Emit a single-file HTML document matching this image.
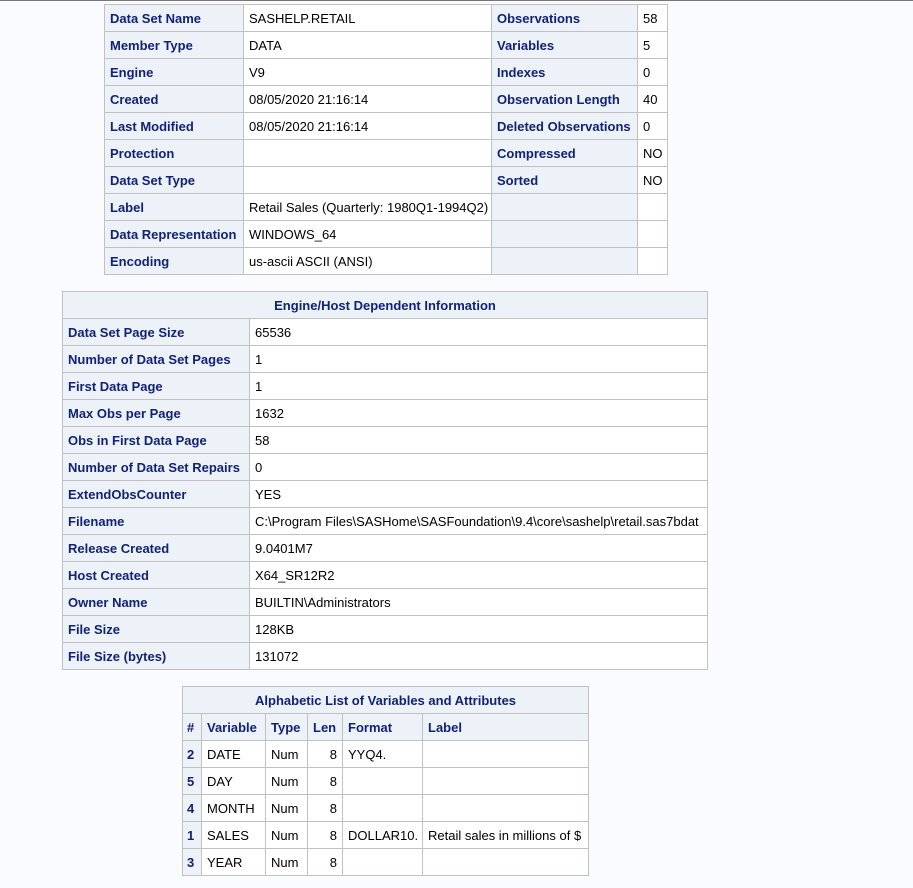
<!DOCTYPE html>
<html><head><meta charset="utf-8"><style>
html,body{margin:0;padding:0;background:#fafbfe;width:913px;height:888px;overflow:hidden}
body{border-top:1px solid #777;box-sizing:border-box;position:relative;font-family:"Liberation Sans",Arial,sans-serif;font-size:13px;color:#000}
table{position:absolute;border-collapse:collapse;table-layout:fixed;background:#fff;border:1px solid #c1c1c1}
td,th{border:1px solid #c1c1c1;height:26px;padding:0 5px;white-space:nowrap;overflow:hidden;text-align:left;font-weight:normal;vertical-align:middle}
th,.h{background:#edf2f9;color:#112277;font-weight:bold}
.r{text-align:right}
.c{text-align:center}
.e{background:#edf2f9}
</style></head><body>
<table style="left:104px;top:3px;width:563px">
<col style="width:139px"><col style="width:248px"><col style="width:146px"><col style="width:30px">
<tr><td class="h">Data Set Name</td><td>SASHELP.RETAIL</td><td class="h">Observations</td><td>58</td></tr>
<tr><td class="h">Member Type</td><td>DATA</td><td class="h">Variables</td><td>5</td></tr>
<tr><td class="h">Engine</td><td>V9</td><td class="h">Indexes</td><td>0</td></tr>
<tr><td class="h">Created</td><td>08/05/2020 21:16:14</td><td class="h">Observation Length</td><td>40</td></tr>
<tr><td class="h">Last Modified</td><td>08/05/2020 21:16:14</td><td class="h">Deleted Observations</td><td>0</td></tr>
<tr><td class="h">Protection</td><td></td><td class="h">Compressed</td><td>NO</td></tr>
<tr><td class="h">Data Set Type</td><td></td><td class="h">Sorted</td><td>NO</td></tr>
<tr><td class="h">Label</td><td>Retail Sales (Quarterly: 1980Q1-1994Q2)</td><td class="e"></td><td></td></tr>
<tr><td class="h">Data Representation</td><td>WINDOWS_64</td><td class="e"></td><td></td></tr>
<tr><td class="h">Encoding</td><td>us-ascii ASCII (ANSI)</td><td class="e"></td><td></td></tr>
</table>

<table style="left:62px;top:290px;width:645px">
<col style="width:187px"><col style="width:458px">
<tr><th colspan="2" class="c">Engine/Host Dependent Information</th></tr>
<tr><td class="h">Data Set Page Size</td><td>65536</td></tr>
<tr><td class="h">Number of Data Set Pages</td><td>1</td></tr>
<tr><td class="h">First Data Page</td><td>1</td></tr>
<tr><td class="h">Max Obs per Page</td><td>1632</td></tr>
<tr><td class="h">Obs in First Data Page</td><td>58</td></tr>
<tr><td class="h">Number of Data Set Repairs</td><td>0</td></tr>
<tr><td class="h">ExtendObsCounter</td><td>YES</td></tr>
<tr><td class="h">Filename</td><td>C:\Program Files\SASHome\SASFoundation\9.4\core\sashelp\retail.sas7bdat</td></tr>
<tr><td class="h">Release Created</td><td>9.0401M7</td></tr>
<tr><td class="h">Host Created</td><td>X64_SR12R2</td></tr>
<tr><td class="h">Owner Name</td><td>BUILTIN\Administrators</td></tr>
<tr><td class="h">File Size</td><td>128KB</td></tr>
<tr><td class="h">File Size (bytes)</td><td>131072</td></tr>
</table>

<table style="left:182px;top:685px;width:406px">
<col style="width:19px"><col style="width:64px"><col style="width:42px"><col style="width:35px"><col style="width:80px"><col style="width:166px">
<tr><th colspan="6" class="c">Alphabetic List of Variables and Attributes</th></tr>
<tr><th style="padding:0 4px">#</th><th>Variable</th><th>Type</th><th>Len</th><th>Format</th><th>Label</th></tr>
<tr><td class="h" style="padding:0 4px">2</td><td>DATE</td><td>Num</td><td class="r">8</td><td>YYQ4.</td><td></td></tr>
<tr><td class="h" style="padding:0 4px">5</td><td>DAY</td><td>Num</td><td class="r">8</td><td></td><td></td></tr>
<tr><td class="h" style="padding:0 4px">4</td><td>MONTH</td><td>Num</td><td class="r">8</td><td></td><td></td></tr>
<tr><td class="h" style="padding:0 4px">1</td><td>SALES</td><td>Num</td><td class="r">8</td><td>DOLLAR10.</td><td>Retail sales in millions of $</td></tr>
<tr><td class="h" style="padding:0 4px">3</td><td>YEAR</td><td>Num</td><td class="r">8</td><td></td><td></td></tr>
</table>
</body></html>
